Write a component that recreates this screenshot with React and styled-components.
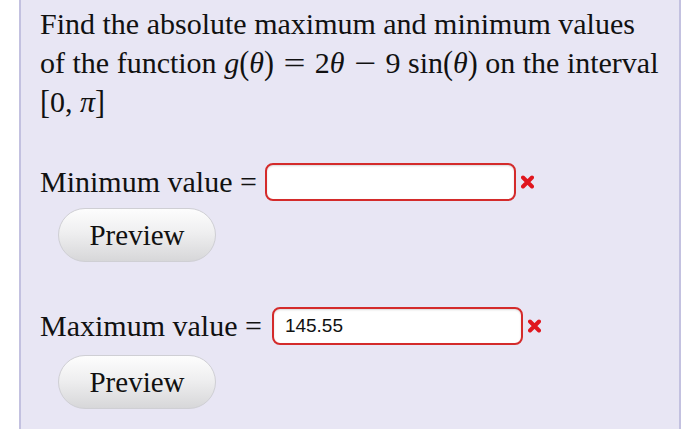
import React from 'react';
import styled, { createGlobalStyle } from 'styled-components';

const Global = createGlobalStyle`
  html, body { margin: 0; padding: 0; background: #ffffff; }
  body { font-family: "Liberation Serif", "Times New Roman", serif; }
`;

const Panel = styled.div`
  margin-left: 19px;
  width: 662px;
  height: 429px;
  box-sizing: border-box;
  background: #e8e6f4;
  border-left: 2px solid #c3c1e0;
  border-right: 2px solid #c3c1e0;
  padding: 4px 0 0 19px;
  color: #111;
`;

const Question = styled.div`
  font-size: 30px;
  line-height: 39px;
  height: 117px;
  white-space: nowrap;
`;

const Line = styled.div``;

const Var = styled.i`
  font-style: italic;
`;

const Op = styled.span`
  display: inline-block;
  transform: scaleX(1.3);
  margin: 0 ${p => p.pad}px;
`;

const Tall = styled.span`
  display: inline-block;
  transform: scaleY(1.12);
`;

const Row = styled.div`
  display: flex;
  align-items: center;
  margin-top: ${p => p.top}px;
  font-size: 30px;
`;

const Label = styled.span`
  margin-right: ${p => p.gap}px;
`;

const Input = styled.div`
  width: 251px;
  height: 38px;
  box-sizing: border-box;
  border: 2px solid #d42b2b;
  border-radius: 8px;
  background: #fff;
  box-shadow: inset 0 1px 2px rgba(0,0,0,0.15);
  font-family: "Liberation Sans", Arial, sans-serif;
  font-size: 19px;
  display: flex;
  align-items: center;
  padding-left: 11px;
  color: #111;
`;

const Cross = styled.svg`
  width: 13px;
  height: 14px;
  margin-left: 5px;
`;

const Button = styled.div`
  margin: ${p => p.top}px 0 0 18px;
  width: 158px;
  height: 54px;
  box-sizing: border-box;
  border-radius: 27px;
  border: 1px solid #cfcfd4;
  background: linear-gradient(#fdfdfd, #efeff0 45%, #d7d7d9);
  display: flex;
  align-items: center;
  justify-content: center;
  font-size: 29px;
  color: #111;
`;

function Mark() {
  return (
    <Cross viewBox="0 0 13 14">
      <path d="M2 2.5 L11 11.5 M11 2.5 L2 11.5" stroke="#e0161e" strokeWidth="4" strokeLinecap="round" />
    </Cross>
  );
}

function Answer({ label, gap, value, top }) {
  return (
    <Row top={top}>
      <Label gap={gap}>{label}</Label>
      <Input>{value}</Input>
      <Mark />
    </Row>
  );
}

export default function App() {
  return (
    <>
      <Global />
      <Panel>
        <Question>
          <Line>Find the absolute maximum and minimum values</Line>
          <Line>
            of the function <Var>g</Var><Tall>(</Tall><Var>θ</Var><Tall>)</Tall>
            <Op pad={12}>=</Op>2<Var>θ</Var>
            <Op pad={12}>−</Op>9 sin<Tall>(</Tall><Var>θ</Var><Tall>)</Tall> on the interval
          </Line>
          <Line>
            <Tall>[</Tall>0, <Var>π</Var><Tall>]</Tall>
          </Line>
        </Question>
        <Answer label="Minimum value =" gap={8} top={42} />
        <Button top={7}>Preview</Button>
        <Answer label="Maximum value =" gap={10} value="145.55" top={45} />
        <Button top={10}>Preview</Button>
      </Panel>
    </>
  );
}
